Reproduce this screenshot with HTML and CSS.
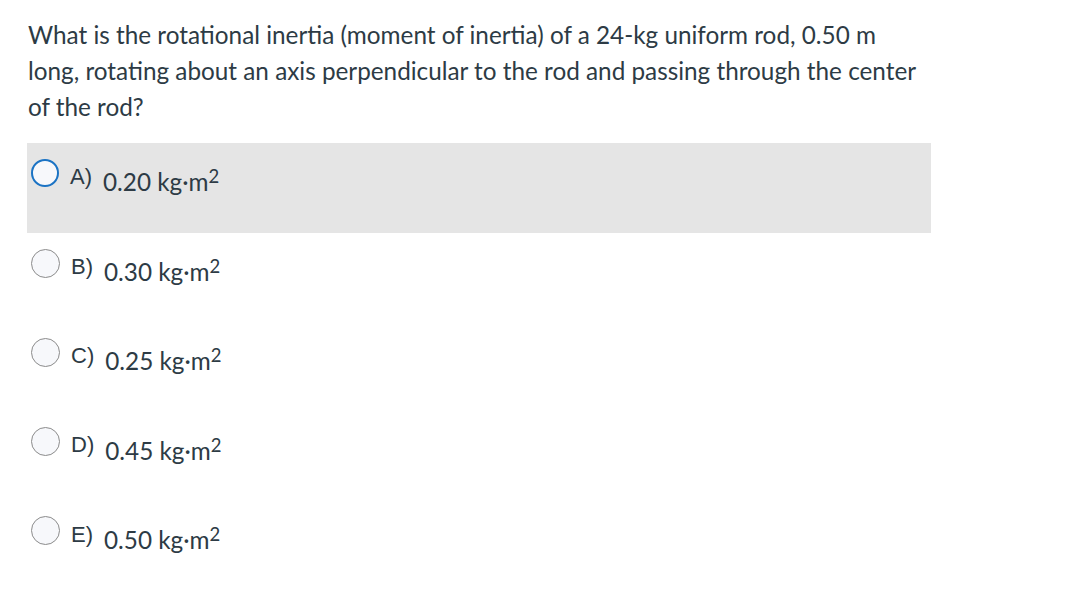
FILE: index.html
```html
<!DOCTYPE html>
<html>
<head>
<meta charset="utf-8">
<link rel="stylesheet" href="styles.css">
</head>
<body>
<div class="quiz">
  <p class="question">What is the rotational inertia (moment of inertia) of a 24-kg uniform rod, 0.50 m long, rotating about an axis perpendicular to the rod and passing through the center of the rod?</p>
  <div class="answers">
    <div class="answer hover">
      <span class="radio active"></span>
      <span class="label">A)</span>
      <span class="text">0.20 kg·m<sup>2</sup></span>
    </div>
    <div class="answer">
      <span class="radio"></span>
      <span class="label">B)</span>
      <span class="text">0.30 kg·m<sup>2</sup></span>
    </div>
    <div class="answer">
      <span class="radio"></span>
      <span class="label">C)</span>
      <span class="text">0.25 kg·m<sup>2</sup></span>
    </div>
    <div class="answer">
      <span class="radio"></span>
      <span class="label">D)</span>
      <span class="text">0.45 kg·m<sup>2</sup></span>
    </div>
    <div class="answer">
      <span class="radio"></span>
      <span class="label">E)</span>
      <span class="text">0.50 kg·m<sup>2</sup></span>
    </div>
  </div>
</div>
</body>
</html>
```
FILE: styles.css
```css
html, body {
  margin: 0;
  padding: 0;
  background: #ffffff;
}
body {
  font-family: Lato, "Liberation Sans", sans-serif;
  color: #2d3b45;
}
.quiz {
  width: 904px;
  margin-left: 27px;
  padding-top: 17px;
}
.question {
  margin: 0 0 18px 0;
  padding-left: 1px;
  font-size: 24.3px;
  line-height: 36px;
}
.answers {
  display: flex;
  flex-direction: column;
}
.answer {
  display: flex;
  align-items: flex-start;
  height: 89.3px;
  box-sizing: border-box;
  padding-top: 15.5px;
  padding-left: 4px;
}
.answer.hover {
  background: #e5e5e5;
  height: 90px;
}
.radio {
  width: 27px;
  height: 27px;
  border-radius: 50%;
  border: 1px solid #8b8b8b;
  background: #f7f8fb;
  flex: none;
}
.radio.active {
  border: 2.5px solid #1b73c4;
  width: 24px;
  height: 24px;
}
.label {
  font-family: "Liberation Sans", Arial, sans-serif;
  font-size: 22px;
  line-height: 28px;
  margin-left: 11px;
  margin-top: 4.3px;
}
.text {
  font-size: 24.3px;
  line-height: 28px;
  margin-left: 11px;
  margin-top: 9.5px;
}
.text sup {
  font-size: 18.5px;
  line-height: 0;
  vertical-align: 0.42em;
}
```
